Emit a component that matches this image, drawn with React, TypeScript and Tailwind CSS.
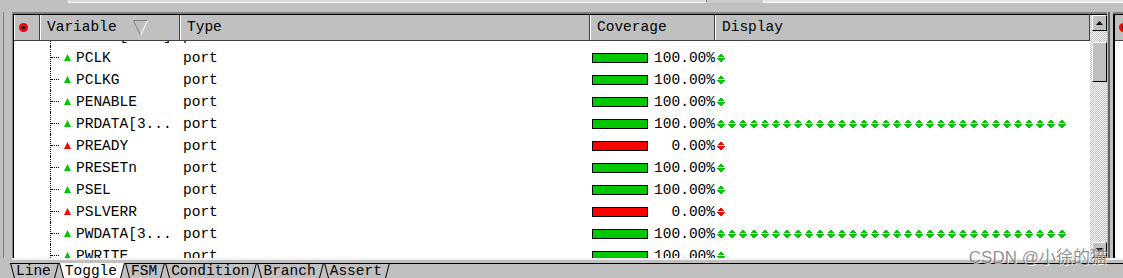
import React from "react"

type Row = { name: string; ok: boolean; n: number }

const rows: Row[] = [
  { name: "PADDR[11:2]", ok: true, n: 20 },
  { name: "PCLK", ok: true, n: 1 },
  { name: "PCLKG", ok: true, n: 1 },
  { name: "PENABLE", ok: true, n: 1 },
  { name: "PRDATA[3...", ok: true, n: 32 },
  { name: "PREADY", ok: false, n: 1 },
  { name: "PRESETn", ok: true, n: 1 },
  { name: "PSEL", ok: true, n: 1 },
  { name: "PSLVERR", ok: false, n: 1 },
  { name: "PWDATA[3...", ok: true, n: 32 },
  { name: "PWRITE", ok: true, n: 1 },
]

const tabs = ["Line", "Toggle", "FSM", "Condition", "Branch", "Assert"]

function Toggle({ ok }: { ok: boolean }) {
  return (
    <svg width="8" height="10" viewBox="0 0 8 10" shapeRendering="crispEdges" className="shrink-0">
      <path d="M4 0L8 4.3H0Z" fill={ok ? "#00c800" : "#ff0000"} />
      <path d="M0 5.4H8L4 9.8Z" fill={ok ? "#00c800" : "#ff0000"} />
    </svg>
  )
}

function Marker({ ok }: { ok: boolean }) {
  return (
    <svg width="7" height="7" viewBox="0 0 7 7" className="ml-[5px] shrink-0">
      <path d="M3.5 0L7 7H0Z" fill={ok ? "#00c800" : "#ff0000"} />
    </svg>
  )
}

function RedDot() {
  return (
    <svg width="9" height="9" viewBox="0 0 9 9" className="shrink-0">
      <circle cx="4.5" cy="4.5" r="4.5" fill="#ff0000" />
      <rect x="3" y="3" width="3" height="3" fill="#3a0000" />
    </svg>
  )
}

function Checker({ className }: { className: string }) {
  return <div className={"bg-[image:repeating-conic-gradient(#c0c0c0_0%_25%,#ffffff_0%_50%)] bg-[length:2px_2px] " + className} />
}

function ScrollButton({ up }: { up: boolean }) {
  return (
    <div className="w-[15px] h-[16px] shrink-0 bg-[#c0c0c0] border-t border-l border-t-white border-l-white border-b border-r border-b-black border-r-black flex items-center justify-center">
      <svg width="7" height="4" viewBox="0 0 7 4">
        <path d={up ? "M3.5 0L7 4H0Z" : "M0 0H7L3.5 4Z"} fill="#000" />
      </svg>
    </div>
  )
}

function TabEdge({ side, active }: { side: "l" | "r"; active: boolean }) {
  return (
    <svg width="5" height="15" viewBox="0 0 5 15" className="shrink-0">
      {active && <path d={side === "l" ? "M0 0H5V15Z" : "M0 0H5L0 15Z"} fill="#ffffff" />}
      {!active && <path d="M0 0.5H5" stroke="#000" />}
      <path d={side === "l" ? "M0.5 0L4.5 15" : "M0.5 15L4.5 0"} stroke="#000" />
    </svg>
  )
}

function BodyRow({ row }: { row: Row }) {
  return (
    <div className="h-[22px] flex items-center">
      <div className="w-[26px] shrink-0" />
      <div className="w-[140px] shrink-0 h-full flex items-center">
        <div className="w-[10px] shrink-0" />
        <div className="h-full border-l border-dotted border-black" />
        <div className="w-[8px] shrink-0 border-t border-dotted border-black" />
        <Marker ok={row.ok} />
        <span className="ml-[5px] whitespace-nowrap pt-[3px]">{row.name}</span>
      </div>
      <div className="w-[410px] shrink-0 pl-[3px] pt-[3px]">port</div>
      <div className="w-[125px] shrink-0 flex items-center pl-[2px]">
        <div className={"w-[56px] h-[10px] shrink-0 mt-[2px] border border-black " + (row.ok ? "bg-[#00c800]" : "bg-[#ff0000]")} />
        <span className="flex-1 text-right pt-[3px]">{row.ok ? "100.00%" : "0.00%"}</span>
      </div>
      <div className="flex-1 min-w-0 flex items-center gap-[3px] pl-[2px] pt-px overflow-hidden">
        {Array.from({ length: row.n }).map((_, i) => (
          <Toggle key={i} ok={row.ok} />
        ))}
      </div>
    </div>
  )
}

export default function App() {
  return (
    <div className="w-[1123px] h-[278px] bg-[#c0c0c0] relative overflow-hidden font-['Liberation_Mono',monospace] text-[14.5px] text-black">
      {/* top strip */}
      <div className="h-[12px] flex">
        <div className="w-[68px] shrink-0" />
        <div className="w-[639px] shrink-0 h-[3px] bg-[#dadada] border-l border-b border-r border-l-white border-b-white border-r-[#808080]" />
        <div className="w-[56px] shrink-0 h-[3px] bg-[#cccccc]" />
        <div className="flex-1 min-w-0 h-[3px] bg-[#e6e6e6] border-l border-b border-white" />
      </div>

      {/* main area */}
      <div className="flex h-[246px]">
        <div className="w-[12px] shrink-0 pl-[3px]">
          <div className="w-px h-full bg-[#808080]" />
        </div>

        <div className="w-[1095px] shrink-0 border-t-2 border-l border-[#808080]">
          <div className="h-full flex border-t border-l border-black">
            <div className="w-[1076px] shrink-0 flex flex-col">
              <div className="h-[26px] shrink-0 flex border-b border-[#404040]">
                <div className="w-[26px] shrink-0 h-full flex items-center pl-[4px] border-l border-r border-l-white border-r-[#404040]">
                  <RedDot />
                </div>
                <div className="w-[140px] shrink-0 h-full flex items-center pl-[6px] pt-px border-l border-r border-l-white border-r-[#404040]">
                  <span>Variable</span>
                  <svg width="15" height="16" viewBox="0 0 15 16" className="ml-[16px] shrink-0">
                    <path d="M0.5 0.5H14.5" stroke="#808080" />
                    <path d="M0.5 0.5L7.5 15.5" stroke="#808080" />
                    <path d="M14.5 0.5L7.5 15.5" stroke="#ffffff" />
                  </svg>
                </div>
                <div className="w-[410px] shrink-0 h-full flex items-center pl-[6px] pt-px border-l border-r border-l-white border-r-[#404040]">
                  Type
                </div>
                <div className="w-[125px] shrink-0 h-full flex items-center pl-[6px] pt-px border-l border-r border-l-white border-r-[#404040]">
                  Coverage
                </div>
                <div className="flex-1 min-w-0 h-full flex items-center pl-[6px] pt-px border-l border-r border-l-white border-r-[#404040]">
                  Display
                </div>
              </div>
              <div className="h-[217px] shrink-0 bg-white overflow-hidden">
                <div className="mt-[-17px]">
                  {rows.map((r) => (
                    <BodyRow key={r.name} row={r} />
                  ))}
                </div>
              </div>
            </div>

            {/* scrollbar */}
            <div className="w-[17px] shrink-0 flex flex-col">
              <div className="flex">
                <Checker className="w-[2px] self-stretch" />
                <ScrollButton up />
              </div>
              <Checker className="h-[11px]" />
              <div className="flex">
                <Checker className="w-[2px] self-stretch" />
                <div className="w-[15px] h-[40px] bg-[#c0c0c0] border-t border-l border-t-white border-l-white border-b border-r border-b-black border-r-black" />
              </div>
              <Checker className="flex-1" />
              <div className="flex">
                <Checker className="w-[2px] self-stretch" />
                <ScrollButton up={false} />
              </div>
            </div>
          </div>
        </div>

        <div className="w-[6px] shrink-0 flex">
          <div className="w-px" />
          <div className="w-[2px] bg-[#606060]" />
          <div className="w-[3px]" />
        </div>

        <div className="flex-1 min-w-0 overflow-hidden border-t-2 border-[#808080]">
          <div className="h-full flex flex-col border-t border-l-2 border-black">
            <div className="h-[26px] shrink-0 flex items-center pl-[4px] border-b border-[#404040]">
              <RedDot />
            </div>
            <div className="flex-1 bg-white" />
          </div>
        </div>
      </div>

      <div className="ml-[12px] h-[2px] bg-[#f2f2f2]" />
      <div className="h-[3px]" />

      {/* tabs */}
      <div className="h-[15px] flex">
        <div className="w-[10px] shrink-0" />
        {tabs.map((t) => {
          const active = t === "Toggle"
          return (
            <div key={t} className="flex h-[15px] shrink-0">
              <TabEdge side="l" active={active} />
              <div className={"h-[15px] pl-[1px] pr-[3px] whitespace-nowrap " + (active ? "bg-white leading-[16px]" : "border-t border-black leading-[14px]")}>
                {t}
              </div>
              <TabEdge side="r" active={active} />
            </div>
          )
        })}
        <div className="flex-1 min-w-0 h-[15px] border-t border-black" />
      </div>

      {/* watermark */}
      <div className="absolute right-[16px] top-[248px] text-[17px] leading-[20px] font-['Liberation_Sans','Noto_Sans_CJK_SC',sans-serif] text-[rgba(110,110,110,0.75)] [text-shadow:1px_1px_0_rgba(255,255,255,0.7)]">
        CSDN @小徐的猫
      </div>
    </div>
  )
}
